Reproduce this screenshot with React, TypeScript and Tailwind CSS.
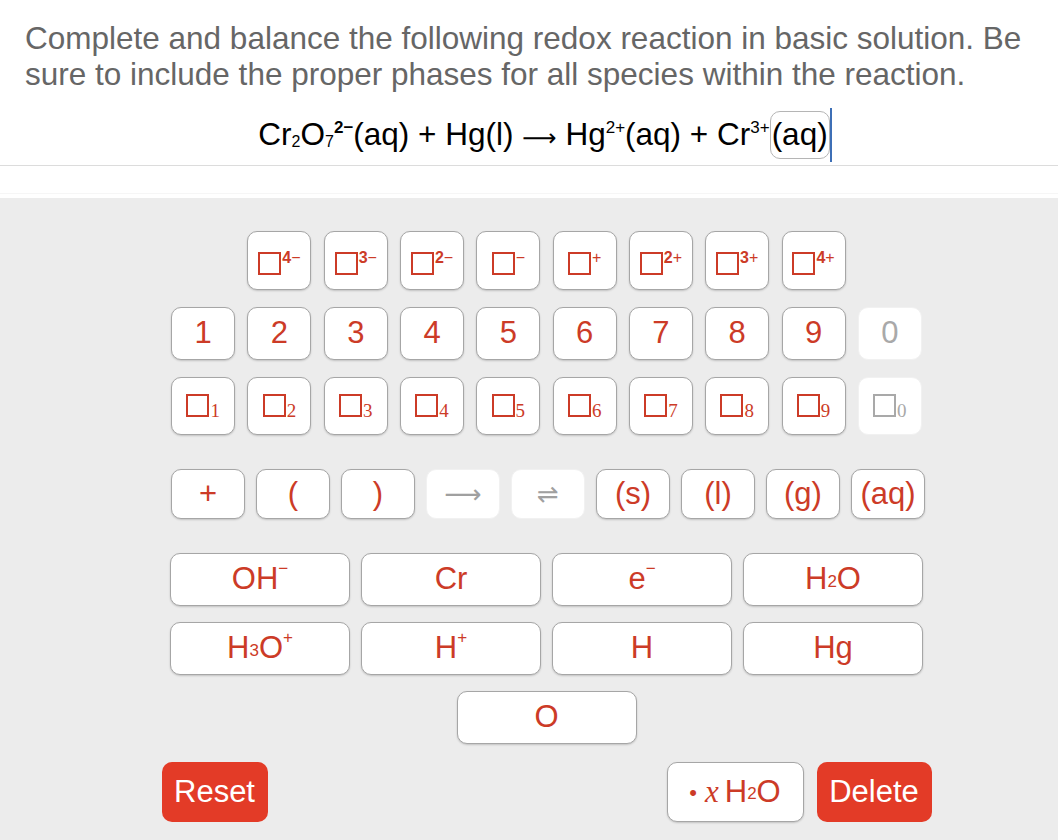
import React from 'react'

const red = 'text-[#cc3b27]'

interface KeyProps {
  children?: React.ReactNode
  className?: string
  disabled?: boolean
}

const Key: React.FC<KeyProps> = ({ children, className = '', disabled }) => {
  const look = disabled
    ? 'text-[#a9a9a9] border border-[#f1f1f1]'
    : `${red} border border-[#a6a6a6] shadow-[0_1px_2px_rgba(0,0,0,0.18)]`
  return (
    <div className={`flex items-center justify-center rounded-[10px] bg-white ${look} ${className}`}>
      {children}
    </div>
  )
}

const Box = () => <span className="inline-block w-[23px] h-[23px] border-2 border-current" />

const ChargeKey = ({ num, sign }: { num: string; sign: string }) => (
  <Key className="h-[59px]">
    <span className="flex items-start mt-[6px]">
      <Box />
      <span className="text-[16px] leading-none -mt-[2px] ml-[1px]">
        <b>{num}</b>
        <span className="font-light">{sign}</span>
      </span>
    </span>
  </Key>
)

const SubKey = ({ n, disabled }: { n: string; disabled?: boolean }) => (
  <Key className="h-[58px]" disabled={disabled}>
    <span className="flex items-end -mt-[2px]">
      <Box />
      <span className="font-['Liberation_Serif',serif] text-[19px] leading-none -mb-[3px] ml-[1px]">{n}</span>
    </span>
  </Key>
)

export default function App() {
  const digits = ['1', '2', '3', '4', '5', '6', '7', '8', '9']
  return (
    <div className="w-[1058px] h-[840px] overflow-hidden bg-white font-['Liberation_Sans',Arial,sans-serif]">
      <div className="px-[25px] pt-[20px] text-[31.5px] leading-[36px] text-[#666]">
        Complete and balance the following redox reaction in basic solution. Be
        <br />
        sure to include the proper phases for all species within the reaction.
      </div>

      <div className="flex justify-center pl-[32px] mt-[18px] h-[50px] items-center text-[31.5px] text-black">
        <span>
          Cr<sub className="text-[16px] -bottom-[2px]">2</sub>O<sub className="text-[16px] -bottom-[2px]">7</sub>
          <sup className="text-[17px] font-bold -top-[12px]">2−</sup>(aq) + Hg(l){' '}
          <span className="font-['DejaVu_Sans',sans-serif] text-[24px] relative top-[1px]">⟶</span> Hg
          <sup className="text-[17px] -top-[12px]">2+</sup>(aq) + Cr<sup className="text-[17px] -top-[12px]">3+</sup>
        </span>
        <span className="border border-[#b5b5b5] rounded-[10px] h-[48px] flex items-center px-[1px]">(aq)</span>
        <span className="w-[2px] h-[54px] bg-[#3d6fb6]" />
      </div>

      <div className="mt-[5px] h-[1px] bg-[#dcdcdc]" />
      <div className="h-[27px]" />
      <div className="h-[1px] bg-[#f6f6f6]" />
      <div className="h-[4px]" />

      <div className="bg-[#ececec] h-full flex flex-col items-center pt-[33px] pl-[35px]">
        <div className="grid grid-cols-[repeat(10,64px)] gap-x-[12.3px] gap-y-[17px]">
          <div />
          <ChargeKey num="4" sign="−" />
          <ChargeKey num="3" sign="−" />
          <ChargeKey num="2" sign="−" />
          <ChargeKey num="" sign="−" />
          <ChargeKey num="" sign="+" />
          <ChargeKey num="2" sign="+" />
          <ChargeKey num="3" sign="+" />
          <ChargeKey num="4" sign="+" />
          <div />

          {digits.map((d) => (
            <Key key={d} className="h-[53px] text-[31px]">
              {d}
            </Key>
          ))}
          <Key className="h-[53px] text-[31px]" disabled>
            0
          </Key>

          {digits.map((d) => (
            <SubKey key={d} n={d} />
          ))}
          <SubKey n="0" disabled />
        </div>

        <div className="flex gap-[11px] mt-[34px] ml-[3px] text-[31px]">
          <Key className="w-[74px] h-[50px]">+</Key>
          <Key className="w-[74px] h-[50px]">(</Key>
          <Key className="w-[74px] h-[50px]">)</Key>
          <Key className="w-[74px] h-[50px]" disabled>
            <span className="font-['DejaVu_Sans',sans-serif] text-[26px] text-[#a0a0a0]">⟶</span>
          </Key>
          <Key className="w-[74px] h-[50px]" disabled>
            <span className="font-['DejaVu_Sans',sans-serif] text-[26px] text-[#a0a0a0]">⇌</span>
          </Key>
          <Key className="w-[74px] h-[50px]">(s)</Key>
          <Key className="w-[74px] h-[50px]">(l)</Key>
          <Key className="w-[74px] h-[50px]">(g)</Key>
          <Key className="w-[74px] h-[50px]">(aq)</Key>
        </div>

        <div className="grid grid-cols-[repeat(4,180px)] gap-x-[11px] gap-y-[16px] mt-[34px] text-[31px]">
          <Key className="h-[53px]">
            OH<sup className="text-[17px] -top-[11px]">−</sup>
          </Key>
          <Key className="h-[53px]">Cr</Key>
          <Key className="h-[53px]">
            e<sup className="text-[17px] -top-[11px]">−</sup>
          </Key>
          <Key className="h-[53px]">
            H<sub className="text-[17px] -bottom-[2px]">2</sub>O
          </Key>
          <Key className="h-[53px]">
            H<sub className="text-[17px] -bottom-[2px]">3</sub>O<sup className="text-[17px] -top-[11px]">+</sup>
          </Key>
          <Key className="h-[53px]">
            H<sup className="text-[17px] -top-[11px]">+</sup>
          </Key>
          <Key className="h-[53px]">H</Key>
          <Key className="h-[53px]">Hg</Key>
          <div />
          <Key className="h-[53px] col-span-2 w-[180px] justify-self-center">O</Key>
        </div>

        <div className="w-[770px] flex justify-between mt-[18px] text-[31px]">
          <div className="w-[106px] h-[60px] rounded-[10px] bg-[#e33b27] text-white flex items-center justify-center">
            Reset
          </div>
          <div className="flex gap-[13px]">
            <Key className="w-[137px] h-[60px]">
              <span className="text-[22px] mr-[8px]">•</span>
              <span className="font-['Liberation_Serif',serif] italic mr-[6px]">x</span>
              H<sub className="text-[17px] -bottom-[2px]">2</sub>O
            </Key>
            <div className="w-[115px] h-[60px] rounded-[10px] bg-[#e33b27] text-white flex items-center justify-center">
              Delete
            </div>
          </div>
        </div>
      </div>
    </div>
  )
}
